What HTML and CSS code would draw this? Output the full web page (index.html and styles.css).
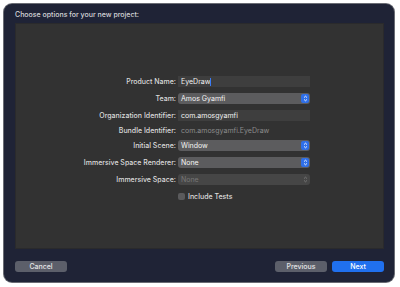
FILE: index.html
```html
<!DOCTYPE html>
<html lang="en">
<head>
    <meta charset="UTF-8">
    <meta name="viewport" content="width=device-width, initial-scale=1.0">
    <title>Choose options</title>
    <link rel="stylesheet" href="styles.css">
</head>
<body>
    <div class="window">
        <div class="title">Choose options for your new project:</div>
        <div class="panel">
            <div class="form">
                <label class="label">Product Name:</label>
                <div class="field">EyeDraw<span class="caret"></span></div>

                <label class="label">Team:</label>
                <div class="popup">Amos Gyamfi<span class="stepper"><svg width="5" height="7" viewBox="0 0 5 7"><path d="M1 2.6 L2.5 1.2 L4 2.6 M1 4.4 L2.5 5.8 L4 4.4" fill="none" stroke="#fff" stroke-width="0.9"/></svg></span></div>

                <label class="label">Organization Identifier:</label>
                <div class="field">com.amosgyamfi</div>

                <label class="label short">Bundle Identifier:</label>
                <div class="plain short">com.amosgyamfi.EyeDraw</div>

                <label class="label">Initial Scene:</label>
                <div class="popup">Window<span class="stepper"><svg width="5" height="7" viewBox="0 0 5 7"><path d="M1 2.6 L2.5 1.2 L4 2.6 M1 4.4 L2.5 5.8 L4 4.4" fill="none" stroke="#fff" stroke-width="0.9"/></svg></span></div>

                <label class="label">Immersive Space Renderer:</label>
                <div class="popup">None<span class="stepper"><svg width="5" height="7" viewBox="0 0 5 7"><path d="M1 2.6 L2.5 1.2 L4 2.6 M1 4.4 L2.5 5.8 L4 4.4" fill="none" stroke="#fff" stroke-width="0.9"/></svg></span></div>

                <label class="label">Immersive Space:</label>
                <div class="popup disabled">None<span class="stepper"><svg width="5" height="7" viewBox="0 0 5 7"><path d="M1 2.6 L2.5 1.2 L4 2.6 M1 4.4 L2.5 5.8 L4 4.4" fill="none" stroke="#7a7a7a" stroke-width="0.9"/></svg></span></div>

                <span></span>
                <div class="check"><span class="box"></span>Include Tests</div>
            </div>
        </div>
        <div class="footer">
            <button class="btn">Cancel</button>
            <div class="right">
                <button class="btn">Previous</button>
                <button class="btn primary">Next</button>
            </div>
        </div>
    </div>
</body>
</html>
```

FILE: styles.css
```css
body {
    margin: 0;
    background: #fff;
    font-family: Inter, "Liberation Sans", sans-serif;
}

.window {
    margin: 4px;
    width: 390px;
    height: 278px;
    box-sizing: border-box;
    background: #1f2336;
    border-radius: 8px;
    box-shadow: 0 0 0 1px #6a6c74;
    padding: 0 10px 0 11px;
    display: flex;
    flex-direction: column;
}

.title {
    color: #d6d6d8;
    font-size: 7px;
    font-weight: 500;
    height: 19px;
    line-height: 22px;
}

.panel {
    height: 226px;
    box-sizing: border-box;
    background: #323232;
    border: 1px solid #2a2a2c;
}

.form {
    display: grid;
    grid-template-columns: 160px 132px;
    grid-template-rows: 11px 11px 11px 7px 11px 11px 11px 11px;
    column-gap: 2px;
    row-gap: 6px;
    margin-top: 52px;
    font-size: 7px;
}

.label {
    color: #dcdcdc;
    text-align: right;
    line-height: 11px;
    font-weight: 500;
}

.label.short, .plain.short {
    line-height: 7px;
}

.field {
    background: #3e3e3e;
    color: #f2f2f2;
    line-height: 11px;
    padding-left: 3px;
    display: flex;
    align-items: center;
}

.caret {
    width: 1px;
    height: 8px;
    background: #3a7bf5;
}

.plain {
    color: #8c8c8c;
    padding-left: 3px;
}

.popup {
    background: #5c5c5e;
    color: #f4f4f4;
    border-radius: 3px;
    line-height: 11px;
    padding-left: 3px;
    display: flex;
    align-items: center;
    justify-content: space-between;
    padding-right: 1px;
}

.stepper {
    width: 8px;
    height: 9px;
    background: #2f6fe8;
    border-radius: 2px;
    display: flex;
    align-items: center;
    justify-content: center;
}

.popup.disabled {
    background: #464646;
    color: #777;
}

.popup.disabled .stepper {
    background: none;
}

.check {
    display: flex;
    align-items: center;
    color: #dcdcdc;
    font-weight: 500;
}

.box {
    width: 7px;
    height: 7px;
    border-radius: 2px;
    background: #5a5a5c;
    margin-right: 3px;
}

.footer {
    display: flex;
    justify-content: space-between;
    align-items: flex-start;
    padding-top: 12px;
}

.right {
    display: flex;
    gap: 5px;
}

.btn {
    width: 52px;
    height: 11px;
    padding: 0;
    border: none;
    border-radius: 3px;
    background: #5c5f6a;
    color: #e4e4e6;
    font-family: Inter, "Liberation Sans", sans-serif;
    font-size: 7px;
    font-weight: 500;
}

.btn.primary {
    background: #2070ee;
    color: #fff;
}
```
